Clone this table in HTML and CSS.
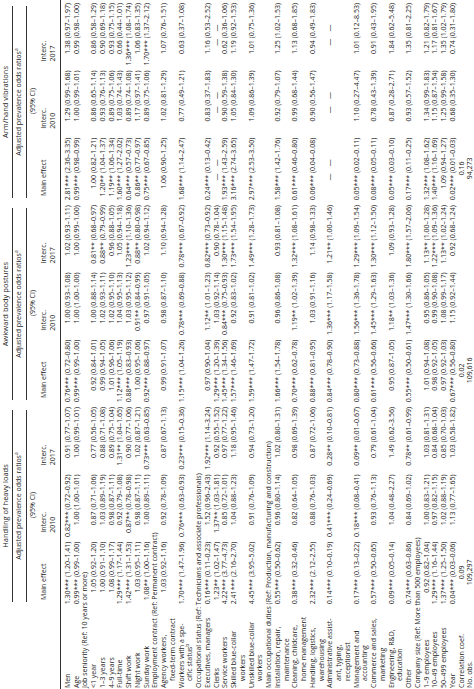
FILE: index.html
```html
<!DOCTYPE html>
<html lang="en">
<head>
<meta charset="utf-8">
<title>Adjusted prevalence odds ratios</title>
<link rel="stylesheet" href="styles.css">
</head>
<body>
<div class="frame">
<div class="sheet">
<table class="tbl">
<colgroup>
<col class="c-lab"><col class="c-val"><col class="c-val"><col class="c-val"><col class="c-val"><col class="c-val"><col class="c-val"><col class="c-val"><col class="c-val"><col class="c-val">
</colgroup>
<thead>
<tr class="h-grp">
<th></th>
<th colspan="3"><div class="ul">Handling of heavy loads</div></th>
<th colspan="3"><div class="ul">Awkward body postures</div></th>
<th colspan="3"><div class="ul">Arm/hand vibrations</div></th>
</tr>
<tr class="h-adj">
<th></th>
<th colspan="3"><div class="ul">Adjusted prevalence odds ratios<sup>a</sup></div></th>
<th colspan="3"><div class="ul">Adjusted prevalence odds ratios<sup>a</sup></div></th>
<th colspan="3"><div class="ul">Adjusted prevalence odds ratios<sup>a</sup></div></th>
</tr>
<tr class="h-ci">
<th></th>
<th colspan="3">(95% CI)</th>
<th colspan="3">(95% CI)</th>
<th colspan="3">(95% CI)</th>
</tr>
<tr class="h-col">
<th></th>
<th>Main effect</th><th>Interc.<br>2010</th><th>Interc.<br>2017</th>
<th>Main effect</th><th>Interc.<br>2010</th><th>Interc.<br>2017</th>
<th>Main effect</th><th>Interc.<br>2010</th><th>Interc.<br>2017</th>
</tr>
</thead>
<tbody>
<tr><td class="lab">Men</td><td>1.30*** (1.20–1.41)</td><td>0.82*** (0.72–0.92)</td><td>0.91 (0.77–1.07)</td><td>0.76*** (0.72–0.80)</td><td>1.00 (0.93–1.08)</td><td>1.02 (0.93–1.11)</td><td>2.81*** (2.36–3.35)</td><td>1.29 (0.99–1.68)</td><td>1.38 (0.97–1.97)</td></tr>
<tr><td class="lab">Age</td><td>0.99*** (0.99–1.00)</td><td>1.00 (1.00–1.01)</td><td>1.00 (0.99–1.01)</td><td>0.99*** (0.99–1.00)</td><td>1.00 (1.00–1.00)</td><td>1.00 (0.99–1.00)</td><td>0.99*** (0.98–0.99)</td><td>1.00 (0.99–1.01)</td><td>0.99 (0.98–1.00)</td></tr>
<tr class="sec"><td class="lab" colspan="10">Job seniority (Ref: 10 years or more)</td></tr>
<tr><td class="lab">&lt;1 year</td><td>1.05 (0.92–1.20)</td><td>0.87 (0.71–1.06)</td><td>0.77 (0.56–1.05)</td><td>0.92 (0.84–1.01)</td><td>1.00 (0.88–1.14)</td><td>0.81** (0.68–0.97)</td><td>1.00 (0.82–1.21)</td><td>0.86 (0.65–1.14)</td><td>0.86 (0.58–1.29)</td></tr>
<tr><td class="lab">1–3 years</td><td>1.00 (0.91–1.10)</td><td>1.03 (0.89–1.19)</td><td>0.88 (0.71–1.08)</td><td>0.99 (0.94–1.05)</td><td>1.02 (0.93–1.11)</td><td>0.88** (0.79–0.99)</td><td>1.20** (1.04–1.37)</td><td>0.93 (0.76–1.13)</td><td>0.90 (0.69–1.18)</td></tr>
<tr><td class="lab">4–9 years</td><td>1.08 (0.99–1.17)</td><td>0.98 (0.87–1.11)</td><td>0.89 (0.75–1.04)</td><td>1.01 (0.96–1.06)</td><td>1.02 (0.95–1.10)</td><td>0.96 (0.88–1.05)</td><td>1.19** (1.06–1.34)</td><td>0.89 (0.75–1.06)</td><td>0.93 (0.75–1.15)</td></tr>
<tr><td class="lab">Full-time</td><td>1.29*** (1.17–1.44)</td><td>0.92 (0.79–1.08)</td><td>1.31** (1.04–1.65)</td><td>1.12*** (1.05–1.19)</td><td>1.04 (0.95–1.13)</td><td>1.05 (0.94–1.18)</td><td>1.60*** (1.27–2.02)</td><td>1.03 (0.74–1.43)</td><td>0.66 (0.44–1.01)</td></tr>
<tr><td class="lab">Shift work</td><td>1.42*** (1.31–1.53)</td><td>0.87** (0.78–0.98)</td><td>0.90 (0.77–1.06)</td><td>0.88*** (0.83–0.93)</td><td>1.03 (0.95–1.12)</td><td>1.23*** (1.10–1.36)</td><td>0.64*** (0.57–0.73)</td><td>0.89 (0.74–1.08)</td><td>1.36*** (1.08–1.74)</td></tr>
<tr><td class="lab">Night work</td><td>1.03 (0.95–1.11)</td><td>0.98 (0.87–1.11)</td><td>1.02 (0.87–1.21)</td><td>1.00 (0.95–1.06)</td><td>0.91** (0.84–0.99)</td><td>0.88** (0.80–0.98)</td><td>0.86** (0.77–0.97)</td><td>1.17 (0.97–1.41)</td><td>1.06 (0.83–1.35)</td></tr>
<tr><td class="lab">Sunday work</td><td>1.08** (1.00–1.16)</td><td>1.00 (0.89–1.11)</td><td>0.73*** (0.63–0.85)</td><td>0.92*** (0.88–0.97)</td><td>0.97 (0.91–1.05)</td><td>1.02 (0.94–1.12)</td><td>0.75*** (0.67–0.85)</td><td>0.89 (0.75–1.06)</td><td>1.70*** (1.37–2.12)</td></tr>
<tr class="sec"><td class="lab" colspan="10">Employment contract (Ref: Permanent contract)</td></tr>
<tr><td class="lab">Agency workers,<br><span class="ind">fixed-term contract</span></td><td>1.03 (0.92–1.16)</td><td>0.92 (0.78–1.09)</td><td>0.87 (0.67–1.13)</td><td>0.99 (0.91–1.07)</td><td>0.98 (0.87–1.10)</td><td>1.10 (0.94–1.28)</td><td>1.06 (0.90–1.25)</td><td>1.02 (0.81–1.29)</td><td>1.07 (0.76–1.51)</td></tr>
<tr><td class="lab">Workers with a spe-<br><span class="ind">cific status<sup>b</sup></span></td><td>1.70*** (1.47–1.96)</td><td>0.76*** (0.63–0.93)</td><td>0.23*** (0.15–0.36)</td><td>1.15*** (1.04–1.26)</td><td>0.78*** (0.69–0.88)</td><td>0.78*** (0.67–0.92)</td><td>1.68*** (1.14–2.47)</td><td>0.77 (0.49–1.21)</td><td>0.63 (0.37–1.08)</td></tr>
<tr class="sec"><td class="lab" colspan="10">Occupational status (Ref: Technicians and associate professionals)</td></tr>
<tr><td class="lab">Executives, managers</td><td>0.16*** (0.11–0.23)</td><td>1.52 (0.96–2.43)</td><td>1.92*** (1.14–3.24)</td><td>0.97 (0.90–1.04)</td><td>1.12** (1.01–1.23)</td><td>0.82*** (0.73–0.92)</td><td>0.24*** (0.13–0.42)</td><td>0.83 (0.37–1.83)</td><td>1.16 (0.53–2.52)</td></tr>
<tr><td class="lab">Clerks</td><td>1.23** (1.02–1.47)</td><td>1.37** (1.03–1.81)</td><td>0.92 (0.55–1.52)</td><td>1.29*** (1.20–1.39)</td><td>1.03 (0.92–1.14)</td><td>0.90 (0.78–1.04)</td><td class="dash">—&nbsp;&nbsp;&nbsp;&nbsp;—</td><td class="dash">—&nbsp;&nbsp;&nbsp;&nbsp;—</td><td class="dash">—&nbsp;&nbsp;&nbsp;&nbsp;—</td></tr>
<tr><td class="lab">Service workers</td><td>4.22*** (3.77–4.73)</td><td>0.85 (0.72–1.01)</td><td>0.97 (0.77–1.22)</td><td>1.45*** (1.34–1.56)</td><td>0.84*** (0.75–0.93)</td><td>1.30*** (1.15–1.48)</td><td>1.93*** (1.43–2.59)</td><td>0.90 (0.59–1.38)</td><td>0.62 (0.36–1.06)</td></tr>
<tr><td class="lab">Skilled blue-collar<br><span class="ind">workers</span></td><td>2.41*** (2.16–2.70)</td><td>1.04 (0.88–1.23)</td><td>1.18 (0.95–1.46)</td><td>1.57*** (1.46–1.69)</td><td>0.92 (0.83–1.02)</td><td>1.73*** (1.54–1.95)</td><td>3.16*** (2.74–3.65)</td><td>1.05 (0.84–1.30)</td><td>1.19 (0.92–1.53)</td></tr>
<tr><td class="lab">Unskilled blue-collar<br><span class="ind">workers</span></td><td>4.45*** (3.95–5.02)</td><td>0.91 (0.76–1.09)</td><td>0.94 (0.73–1.20)</td><td>1.59*** (1.47–1.72)</td><td>0.91 (0.81–1.02)</td><td>1.49*** (1.28–1.73)</td><td>2.97*** (2.53–3.50)</td><td>1.09 (0.86–1.39)</td><td>1.01 (0.75–1.36)</td></tr>
<tr class="sec"><td class="lab" colspan="10">Main occupational duties (Ref: Production, manufacturing and construction)</td></tr>
<tr><td class="lab">Installation, repair,<br><span class="ind">maintenance</span></td><td>0.55*** (0.50–0.62)</td><td>0.96 (0.80–1.14)</td><td>1.02 (0.80–1.31)</td><td>1.66*** (1.54–1.78)</td><td>0.96 (0.86–1.08)</td><td>0.93 (0.81–1.08)</td><td>1.58*** (1.42–1.76)</td><td>0.92 (0.79–1.07)</td><td>1.25 (1.02–1.53)</td></tr>
<tr><td class="lab">Cleaning, childcare,<br><span class="ind">home management</span></td><td>0.38*** (0.32–0.46)</td><td>0.82 (0.64–1.05)</td><td>0.98 (0.69–1.39)</td><td>0.70*** (0.62–0.78)</td><td>1.19** (1.02–1.39)</td><td>1.32*** (1.08–1.61)</td><td>0.61*** (0.46–0.80)</td><td>0.99 (0.68–1.44)</td><td>1.13 (0.68–1.85)</td></tr>
<tr><td class="lab">Handling, logistics,<br><span class="ind">warehousing</span></td><td>2.32*** (2.12–2.55)</td><td>0.88 (0.76–1.03)</td><td>0.87 (0.72–1.06)</td><td>0.88*** (0.81–0.95)</td><td>1.03 (0.91–1.16)</td><td>1.14 (0.98–1.33)</td><td>0.06*** (0.04–0.08)</td><td>0.90 (0.56–1.47)</td><td>0.94 (0.49–1.83)</td></tr>
<tr><td class="lab">Administrative assist-<br><span class="ind">ant, typing,</span><br><span class="ind">receptionist</span></td><td>0.14*** (0.10–0.19)</td><td>0.41*** (0.24–0.69)</td><td>0.28** (0.10–0.81)</td><td>0.84*** (0.78–0.90)</td><td>1.36*** (1.17–1.58)</td><td>1.21** (1.00–1.46)</td><td class="dash">—&nbsp;&nbsp;&nbsp;&nbsp;—</td><td class="dash">—&nbsp;&nbsp;&nbsp;&nbsp;—</td><td class="dash">—&nbsp;&nbsp;&nbsp;&nbsp;—</td></tr>
<tr><td class="lab">Management and<br><span class="ind">accounting</span></td><td>0.17*** (0.13–0.22)</td><td>0.18*** (0.08–0.41)</td><td>0.09** (0.01–0.67)</td><td>0.80*** (0.73–0.88)</td><td>1.56*** (1.36–1.78)</td><td>1.29*** (1.09–1.54)</td><td>0.05*** (0.02–0.11)</td><td>1.10 (0.27–4.47)</td><td>1.01 (0.12–8.53)</td></tr>
<tr><td class="lab">Commerce and sales,<br><span class="ind">marketing</span></td><td>0.57*** (0.50–0.65)</td><td>0.93 (0.76–1.13)</td><td>0.79 (0.61–1.04)</td><td>0.61*** (0.56–0.66)</td><td>1.45*** (1.29–1.63)</td><td>1.30*** (1.12–1.50)</td><td>0.08*** (0.05–0.11)</td><td>0.78 (0.43–1.39)</td><td>0.91 (0.43–1.95)</td></tr>
<tr><td class="lab">Engineering, R&amp;D,<br><span class="ind">education</span></td><td>0.09*** (0.05–0.14)</td><td>1.04 (0.48–2.27)</td><td>1.49 (0.62–3.56)</td><td>0.95 (0.87–1.05)</td><td>1.18** (1.03–1.36)</td><td>1.09 (0.93–1.28)</td><td>0.05*** (0.03–0.10)</td><td>0.87 (0.28–2.71)</td><td>1.84 (0.62–5.48)</td></tr>
<tr><td class="lab">Other</td><td>0.74*** (0.63–0.86)</td><td>0.84 (0.69–1.02)</td><td>0.78** (0.61–0.99)</td><td>0.55*** (0.50–0.61)</td><td>1.47*** (1.30–1.66)</td><td>1.80*** (1.57–2.06)</td><td>0.17*** (0.11–0.25)</td><td>0.93 (0.57–1.52)</td><td>1.35 (0.81–2.25)</td></tr>
<tr class="sec"><td class="lab" colspan="10">Company size (Ref: More than 500 employees)</td></tr>
<tr><td class="lab">1–9 employees</td><td>0.92 (0.82–1.04)</td><td>1.00 (0.83–1.21)</td><td>1.03 (0.81–1.31)</td><td>1.01 (0.94–1.08)</td><td>0.95 (0.86–1.05)</td><td>1.13** (1.00–1.28)</td><td>1.32*** (1.08–1.62)</td><td>1.34 (0.99–1.83)</td><td>1.21 (0.82–1.79)</td></tr>
<tr><td class="lab">10–49 employees</td><td>1.29*** (1.16–1.44)</td><td>0.97 (0.82–1.15)</td><td>0.84 (0.68–1.04)</td><td>0.98 (0.92–1.05)</td><td>0.99 (0.90–1.08)</td><td>1.22*** (1.09–1.36)</td><td>1.40*** (1.16–1.69)</td><td>1.15 (0.87–1.54)</td><td>1.17 (0.81–1.67)</td></tr>
<tr><td class="lab">50–499 employees</td><td>1.37*** (1.25–1.50)</td><td>1.02 (0.88–1.19)</td><td>0.85 (0.70–1.03)</td><td>0.97 (0.92–1.03)</td><td>1.08 (0.99–1.17)</td><td>1.13** (1.02–1.24)</td><td>1.09 (0.94–1.27)</td><td>1.25 (0.99–1.58)</td><td>1.35 (1.02–1.79)</td></tr>
<tr><td class="lab">Year</td><td>0.04*** (0.03–0.06)</td><td>1.13 (0.77–1.65)</td><td>1.03 (0.58–1.82)</td><td>0.67*** (0.56–0.80)</td><td>1.15 (0.92–1.44)</td><td>0.92 (0.68–1.24)</td><td>0.02*** (0.01–0.03)</td><td>0.68 (0.35–1.30)</td><td>0.74 (0.31–1.80)</td></tr>
<tr><td class="lab">Correlation coef.</td><td class="ctr">0.09</td><td></td><td></td><td class="ctr">0.02</td><td></td><td></td><td class="ctr">0.16</td><td></td><td></td></tr>
<tr class="last"><td class="lab">No. obs.</td><td class="ctr">109,297</td><td></td><td></td><td class="ctr">109,616</td><td></td><td></td><td class="ctr">94,273</td><td></td><td></td></tr>
</tbody>
</table>
</div>
</div>
</body>
</html>
```

FILE: styles.css
```css
html, body {
  margin: 0;
  padding: 0;
  width: 474px;
  height: 689px;
  background: #fff;
  overflow: hidden;
}

.frame {
  width: 474px;
  height: 689px;
  overflow: hidden;
}

.sheet {
  width: 689px;
  height: 474px;
  transform-origin: 0 0;
  transform: translateY(689px) rotate(-90deg);
  background: #fff;
}

.tbl {
  border-collapse: collapse;
  table-layout: fixed;
  width: 689px;
  font-family: "Open Sans", "Noto Sans", sans-serif;
  font-size: 7px;
  line-height: 8.75px;
  color: #1c1c1c;
}

.c-lab { width: 83px; }
.c-val { width: 67.3px; }

.tbl th {
  font-weight: normal;
  padding: 0;
  text-align: center;
  vertical-align: bottom;
}

.h-grp th { font-size: 7.5px; padding-top: 1px; }
.h-adj th, .h-ci th { padding-top: 2px; }
.ul {
  border-bottom: 0.7px solid #333;
  margin: 0 6px 0 4px;
  padding-bottom: 2px;
}
.h-col th {
  text-align: left;
  padding: 3px 0 2px 6px;
  vertical-align: top;
}
.h-col th:first-child { padding: 0; }
thead tr.h-col th { border-bottom: 0.8px solid #333; }

.tbl sup {
  font-size: 5px;
  line-height: 0;
  vertical-align: 3px;
}

.tbl td {
  padding: 0 3px 0 0;
  text-align: right;
  white-space: nowrap;
  vertical-align: top;
}
.tbl tbody tr:first-child td { padding-top: 3px; }

.tbl td.lab {
  text-align: left;
  padding-left: 1px;
  white-space: nowrap;
}
.ind { padding-left: 7px; }
.tbl td.ctr { text-align: center; padding-right: 0; }
.tbl td.dash { text-align: center; }
```
